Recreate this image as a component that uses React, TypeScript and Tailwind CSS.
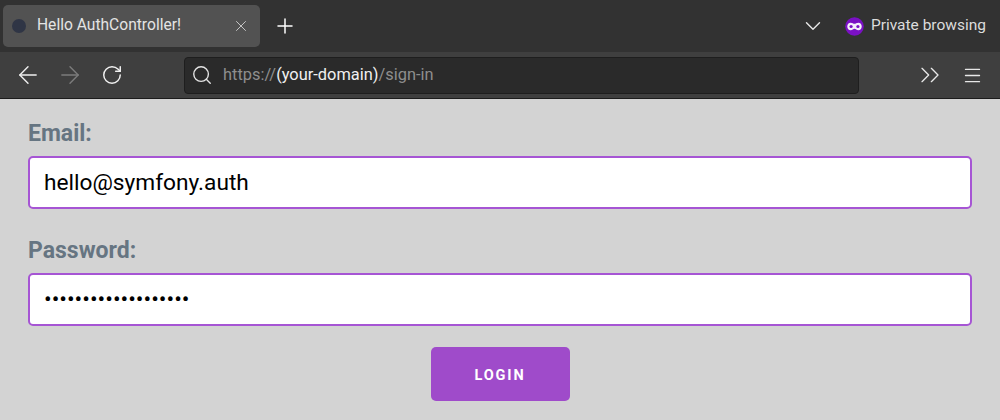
import { ChevronDown, ChevronsRight, Menu, Plus, RotateCw, Search, X, ArrowLeft, ArrowRight } from 'lucide-react';

function PrivateMask() {
  return (
    <svg width="19" height="19" viewBox="0 0 20 20" aria-hidden="true">
      <circle cx="10" cy="10" r="9.800" fill="#7a10c4" />
      <path
        d="M6 6c1.800 0 2.800 1.200 4 1.200S12.200 6 14 6c2.200 0 3.600 1.700 3.600 4s-1.500 4-3.600 4c-1.800 0-2.800-1.700-4-1.700S7.800 14 6 14c-2.100 0-3.600-1.700-3.600-4S3.800 6 6 6z"
        fill="#f4eefa"
      />
      <circle cx="6.400" cy="10" r="1.700" fill="#7a10c4" />
      <circle cx="13.600" cy="10" r="1.700" fill="#7a10c4" />
    </svg>
  );
}

function Field({ label, type, value }: { label: string; type: string; value: string }) {
  return (
    <div className="flex flex-col">
      <label className="h-[34px] text-[23px] leading-[34px] font-bold text-[#667582]">{label}</label>
      <input
        type={type}
        value={value}
        readOnly
        className="mt-[5px] h-[53px] w-full rounded-[5px] border-2 border-[#a655d4] bg-white px-[14px] text-[22.700px] text-black outline-none"
      />
    </div>
  );
}

export default function App() {
  return (
    <div className="flex h-[420px] w-[1000px] flex-col overflow-hidden bg-[#d3d3d3] font-['Roboto',sans-serif]">
      <div className="flex h-[52px] items-center bg-[#323232] pl-[3px] pr-[14px]">
        <div className="flex h-[42px] w-[257px] items-center rounded-[5px] bg-[#525252] pl-[9px] pr-[10px] text-[#e4e4e4]">
          <span className="h-[14px] w-[14px] rounded-full bg-[#2f3545]" />
          <span className="ml-[11px] flex-1 text-[15.600px]">Hello AuthController!</span>
          <X size={18} strokeWidth={1.300} className="text-[#c8c8c8]" />
        </div>
        <Plus size={24} strokeWidth={1.500} className="ml-[13px] text-white" />
        <ChevronDown size={26} strokeWidth={1.300} className="ml-auto text-[#e8e8e8]" />
        <span className="ml-[19px]">
          <PrivateMask />
        </span>
        <span className="ml-[7px] text-[15.500px] text-[#dcdcdc]">Private browsing</span>
      </div>

      <div className="flex h-[47px] items-center border-b border-[#1c1c1c] bg-[#3f3f3f] pl-[14px]">
        <ArrowLeft size={28} strokeWidth={1.200} className="text-[#f0f0f0]" />
        <ArrowRight size={28} strokeWidth={1.200} className="ml-[14px] text-[#7c7c7c]" />
        <RotateCw size={22} strokeWidth={1.600} className="ml-[17px] text-[#f0f0f0]" />
        <div className="ml-[61px] flex h-[37px] w-[675px] items-center rounded-[4px] border border-[#1e1e1e] bg-[#2a2a2a] pl-[6px]">
          <Search size={22} strokeWidth={1.500} className="text-[#e4e4e4]" />
          <span className="ml-[10px] text-[16.400px] text-[#8e8e8e]">
            https://<span className="text-[#f0f0f0]">(your-domain)</span>/sign-in
          </span>
        </div>
        <ChevronsRight size={32} strokeWidth={1} className="ml-[55px] text-[#e8e8e8]" />
        <Menu size={21} strokeWidth={1.500} className="ml-[16px] text-[#e8e8e8]" />
      </div>

      <form className="flex flex-col gap-[25px] px-[28px] pt-[18px]">
        <Field label="Email:" type="text" value="hello@symfony.auth" />
        <Field label="Password:" type="password" value="hello@symfony.auth!" />
      </form>

      <div className="mt-[21px] flex justify-center">
        <button
          type="button"
          className="h-[54px] w-[139px] rounded-[5px] bg-[#9f4bca] pt-[3px] text-[14.500px] font-bold tracking-[0.13em] text-white"
        >
          LOGIN
        </button>
      </div>
    </div>
  );
}
